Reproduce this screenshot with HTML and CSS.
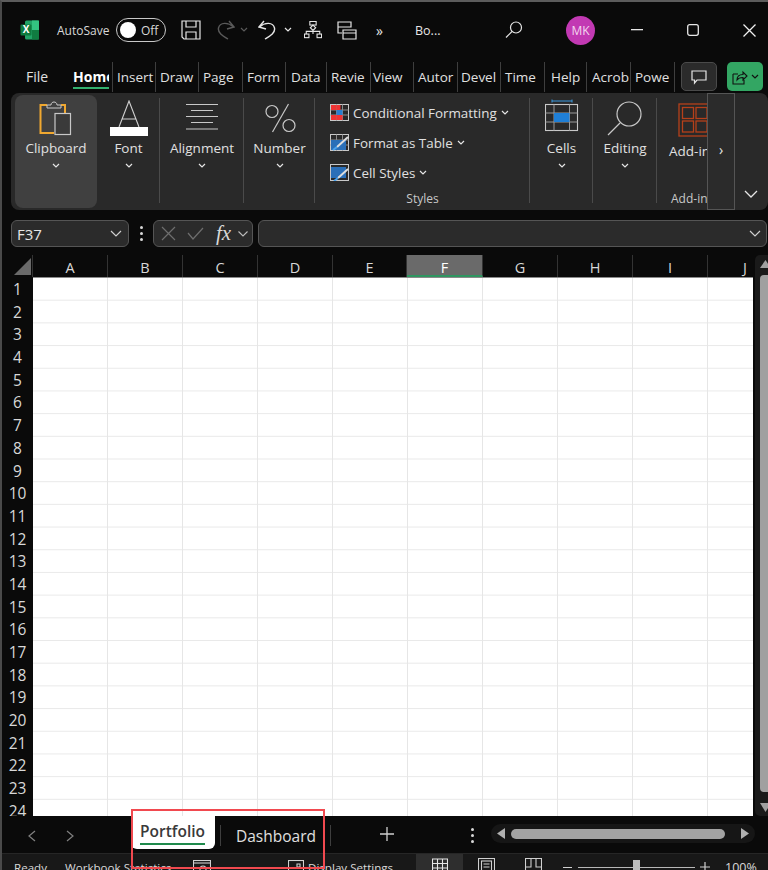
FILE: index.html
```html
<!DOCTYPE html>
<html lang="en">
<head>
<meta charset="utf-8">
<title>Excel</title>
<link rel="stylesheet" href="styles.css">
</head>
<body>
<div class="window">
  <header class="titlebar">
    <svg class="ico-excel" width="20" height="20" viewBox="0 0 20 20"><rect x="5" y="0.5" width="14" height="19" rx="1.5" fill="#21a366"/><rect x="12" y="0.5" width="7" height="9.5" fill="#33c481"/><rect x="12" y="10" width="7" height="9.5" fill="#107c41"/><rect x="0.5" y="4.5" width="11" height="11" rx="1" fill="#0f7b3f"/><text x="6" y="13.2" class="ico-x">X</text></svg>
    <span class="autosave">AutoSave</span>
    <div class="toggle"><span class="knob"></span><span class="toggle-txt">Off</span></div>
    <svg class="ico-save" width="20" height="20" viewBox="0 0 20 20" fill="none" stroke="#e6e6e6" stroke-width="1.2"><path d="M1 1h18v18H3l-2-2z"/><path d="M5 1v6h10V1M5 19v-7h10v7"/></svg>
    <svg class="ico-redo" width="20" height="20" viewBox="0 0 20 20" fill="none" stroke="#5a5a5a" stroke-width="1.4"><path d="M14 1l5 6-7 2M18.500 7C13 2 5 2 3.500 8 2.500 13 8 16 13 19"/></svg>
    <svg class="chev chev-dim" width="8" height="6" viewBox="0 0 8 6" fill="none" stroke="#5a5a5a" stroke-width="1.2"><path d="M1 1l3 3 3-3"/></svg>
    <svg class="ico-undo" width="20" height="20" viewBox="0 0 20 20" fill="none" stroke="#e6e6e6" stroke-width="1.4"><path d="M6 1L1 7l7 2M1.500 7C7 2 15 2 16.500 8 17.500 13 12 16 7 19"/></svg>
    <svg class="chev chev-undo" width="8" height="6" viewBox="0 0 8 6" fill="none" stroke="#e6e6e6" stroke-width="1.2"><path d="M1 1l3 3 3-3"/></svg>
    <svg class="ico-org" width="18" height="18" viewBox="0 0 20 20" fill="none" stroke="#e6e6e6" stroke-width="1.2"><rect x="6.500" y="0.500" width="7" height="4"/><path d="M10 4.500l3 3-3 3-3-3z"/><path d="M2.500 14.500v-3h15v3M10 10.500v4"/><rect x="0.500" y="14.500" width="5" height="4"/><rect x="14.500" y="14.500" width="5" height="4"/></svg>
    <svg class="ico-win" width="20" height="19" viewBox="0 0 20 19" fill="none" stroke="#e6e6e6" stroke-width="1.2"><path d="M1 1h13v5H1zM1 6v6h4"/><path d="M6 9h13v9H6zM6 12h13"/></svg>
    <span class="more">»</span>
    <span class="doc">Bo...</span>
    <svg class="ico-search" width="18" height="18" viewBox="0 0 18 18" fill="none" stroke="#e6e6e6" stroke-width="1.2"><circle cx="11" cy="6.500" r="5.500"/><path d="M7 10.500L1 16.500"/></svg>
    <div class="avatar">MK</div>
    <svg class="ico-min" width="12" height="2" viewBox="0 0 12 2"><rect width="12" height="1.300" fill="#e6e6e6"/></svg>
    <svg class="ico-max" width="12" height="12" viewBox="0 0 12 12" fill="none" stroke="#e6e6e6" stroke-width="1.300"><rect x="0.700" y="0.700" width="10.600" height="10.600" rx="2"/></svg>
    <svg class="ico-close" width="13" height="13" viewBox="0 0 13 13" fill="none" stroke="#f0f0f0" stroke-width="1.300"><path d="M.5.500l12 12M12.500.500l-12 12"/></svg>
  </header>

  <nav class="tabs">
    <span class="tab tab-file">File</span>
    <span class="tab tab-home"><span class="tab-clip">Home</span></span>
    <span class="tab w43">Insert</span>
    <span class="tab w43">Draw</span>
    <span class="tab w44">Page</span>
    <span class="tab w43">Form</span>
    <span class="tab w41">Data</span>
    <span class="tab w44">Revie</span>
    <span class="tab w43 pad-view">View</span>
    <span class="tab w44">Autor</span>
    <span class="tab w43 pad-devel">Devel</span>
    <span class="tab w44">Time</span>
    <span class="tab w42 pad-help">Help</span>
    <span class="tab w44 pad-acro">Acrob</span>
    <span class="tab w44">Powe</span>
    <div class="btn-comment"><svg width="16" height="16" viewBox="0 0 16 16" fill="none" stroke="#e6e6e6" stroke-width="1.200"><path d="M1 2h14v9H6l-2.500 3v-3H1z"/></svg></div>
    <div class="btn-share">
      <svg width="16" height="16" viewBox="0 0 16 16" fill="none" stroke="#111" stroke-width="1.100"><path d="M1 5h5M1 5v10h11v-4M5 11c0-4 3-5.500 6-5.500V3l4 4-4 4V8.500c-3 0-5 1-6 2.500z"/></svg>
      <svg width="8" height="6" viewBox="0 0 8 6" fill="none" stroke="#111" stroke-width="1.200"><path d="M1 1l3 3 3-3"/></svg>
    </div>
  </nav>

  <section class="ribbon">
    <div class="group g-clip">
      <svg class="big" width="34" height="36" viewBox="0 0 34 36" fill="none"><path d="M8 4H1.500v28H15" stroke="#f0a830" stroke-width="2"/><path d="M22 4h4v8" stroke="#f0a830" stroke-width="2"/><path d="M8 7V4h4c0-4 6-4 6 0h4v3z" stroke="#c8c8c8" stroke-width="1"/><rect x="16" y="12.500" width="15.500" height="21" fill="#3a3a3a" stroke="#c8c8c8" stroke-width="1.200"/></svg>
      <span class="g-label">Clipboard</span>
      <svg class="chev-g" width="8" height="6" viewBox="0 0 8 6" fill="none" stroke="#e6e6e6" stroke-width="1.200"><path d="M1 1l3 3 3-3"/></svg>
    </div>
    <div class="group g-font">
      <svg class="big" width="38" height="36" viewBox="0 0 38 36" fill="none"><path d="M9 27L19 1l10 26M12 19h14" stroke="#d0d0d0" stroke-width="1.100"/><rect y="27" width="38" height="9" fill="#fff"/></svg>
      <span class="g-label">Font</span>
      <svg class="chev-g" width="8" height="6" viewBox="0 0 8 6" fill="none" stroke="#e6e6e6" stroke-width="1.200"><path d="M1 1l3 3 3-3"/></svg>
    </div>
    <div class="group g-align">
      <svg class="big" width="34" height="36" viewBox="0 0 34 36" fill="none" stroke="#c8c8c8" stroke-width="1.200"><path d="M1 3.500h32M6 9.500h22M1 15.500h32M6 21.500h22M1 28h32"/></svg>
      <span class="g-label">Alignment</span>
      <svg class="chev-g" width="8" height="6" viewBox="0 0 8 6" fill="none" stroke="#e6e6e6" stroke-width="1.200"><path d="M1 1l3 3 3-3"/></svg>
    </div>
    <div class="group g-num">
      <svg class="big" width="32" height="36" viewBox="0 0 32 36" fill="none" stroke="#c8c8c8" stroke-width="1.200"><circle cx="8" cy="10.500" r="6"/><circle cx="25" cy="24.500" r="6"/><path d="M24.500 3L8.500 31"/></svg>
      <span class="g-label">Number</span>
      <svg class="chev-g" width="8" height="6" viewBox="0 0 8 6" fill="none" stroke="#e6e6e6" stroke-width="1.200"><path d="M1 1l3 3 3-3"/></svg>
    </div>
    <div class="group g-styles">
      <div class="style-rows">
        <div class="style-row">
          <svg width="19" height="17" viewBox="0 0 19 17" fill="none"><rect x=".5" y=".5" width="18" height="16" stroke="#c8c8c8"/><path d="M.5 6h18M.5 11h18M6.500.5v16M12.500.5v16" stroke="#8a8a8a"/><rect x="1" y="1" width="5.500" height="5" fill="#e33"/><rect x="6.500" y="1" width="4" height="5" fill="#e33"/><rect x="6.500" y="6" width="6" height="5" fill="#2a7fd0"/><rect x="1" y="11" width="5.500" height="5" fill="#e33"/><rect x="6.500" y="11" width="6" height="5" fill="#e33"/></svg>
          <span>Conditional Formatting</span>
          <svg width="8" height="6" viewBox="0 0 8 6" fill="none" stroke="#e6e6e6" stroke-width="1.200"><path d="M1 1l3 3 3-3"/></svg>
        </div>
        <div class="style-row">
          <svg width="19" height="17" viewBox="0 0 19 17" fill="none"><rect x=".5" y=".5" width="18" height="16" stroke="#c8c8c8"/><path d="M.5 6h18M.5 11h18M6.500.5v16M12.500.5v16" stroke="#8a8a8a"/><rect x="1" y="6" width="15" height="10" fill="#2a6fb8"/><path d="M18 3L7 13" stroke="#ddd" stroke-width="2"/><path d="M7 13l-4 3" stroke="#4aa3ef" stroke-width="2"/></svg>
          <span>Format as Table</span>
          <svg width="8" height="6" viewBox="0 0 8 6" fill="none" stroke="#e6e6e6" stroke-width="1.200"><path d="M1 1l3 3 3-3"/></svg>
        </div>
        <div class="style-row">
          <svg width="19" height="17" viewBox="0 0 19 17" fill="none"><rect x=".5" y=".5" width="18" height="16" stroke="#c8c8c8"/><rect x="1" y="3" width="15" height="11" fill="#2a6fb8"/><path d="M18 5L8 14" stroke="#ddd" stroke-width="2"/><path d="M8 14l-4 3" stroke="#4aa3ef" stroke-width="2"/></svg>
          <span>Cell Styles</span>
          <svg width="8" height="6" viewBox="0 0 8 6" fill="none" stroke="#e6e6e6" stroke-width="1.200"><path d="M1 1l3 3 3-3"/></svg>
        </div>
      </div>
      <span class="g-foot">Styles</span>
    </div>
    <div class="group g-cells">
      <svg class="big" width="34" height="36" viewBox="0 0 34 36" fill="none"><path d="M7 2h20M7 .5v3M27 .5v3" stroke="#3c9be0"/><rect x=".5" y="5.500" width="32" height="26" stroke="#c8c8c8" stroke-width="1.100"/><path d="M.5 14h32M.5 23h32M9 5.500v26M24.500 5.500v26" stroke="#9a9a9a"/><rect x="9" y="14" width="15.500" height="9" fill="#1f7fd6"/></svg>
      <span class="g-label">Cells</span>
      <svg class="chev-g" width="8" height="6" viewBox="0 0 8 6" fill="none" stroke="#e6e6e6" stroke-width="1.200"><path d="M1 1l3 3 3-3"/></svg>
    </div>
    <div class="group g-edit">
      <svg class="big" width="36" height="36" viewBox="0 0 36 36" fill="none" stroke="#c8c8c8" stroke-width="1.200"><circle cx="22" cy="13" r="12"/><path d="M13 22L1 34"/></svg>
      <span class="g-label">Editing</span>
      <svg class="chev-g" width="8" height="6" viewBox="0 0 8 6" fill="none" stroke="#e6e6e6" stroke-width="1.200"><path d="M1 1l3 3 3-3"/></svg>
    </div>
    <div class="group g-addin">
      <svg class="big" width="33" height="34" viewBox="0 0 33 34" fill="none" stroke="#b5401a" stroke-width="1.300"><rect x="1" y="1" width="31" height="32"/><rect x="4.500" y="4.500" width="11" height="11"/><rect x="18" y="4.500" width="11" height="11"/><rect x="4.500" y="18" width="11" height="11"/><rect x="18" y="18" width="11" height="11"/></svg>
      <span class="g-label lbl-addin">Add-in</span>
      <span class="g-foot foot-addin">Add-in</span>
    </div>
    <div class="overflow-btn">›</div>
    <svg class="ribbon-collapse" width="14" height="8" viewBox="0 0 14 8" fill="none" stroke="#e6e6e6" stroke-width="1.300"><path d="M1 1l6 6 6-6"/></svg>
  </section>

  <section class="formula">
    <div class="namebox"><span>F37</span><svg width="12" height="7" viewBox="0 0 12 7" fill="none" stroke="#d0d0d0" stroke-width="1.200"><path d="M1 1l5 5 5-5"/></svg></div>
    <div class="fdots"><i></i><i></i><i></i></div>
    <div class="fx-box">
      <svg width="15" height="15" viewBox="0 0 15 15" fill="none" stroke="#6e6e6e" stroke-width="1.200"><path d="M1 1l13 13M14 1L1 14"/></svg>
      <svg width="17" height="13" viewBox="0 0 17 13" fill="none" stroke="#6e6e6e" stroke-width="1.200"><path d="M1 6l5 6L16 1"/></svg>
      <span class="fx">fx</span>
      <svg width="10" height="6" viewBox="0 0 10 6" fill="none" stroke="#bdbdbd" stroke-width="1.100"><path d="M.5.500L5 5 9.500.500"/></svg>
    </div>
    <div class="finput"><svg width="12" height="7" viewBox="0 0 12 7" fill="none" stroke="#d0d0d0" stroke-width="1.200"><path d="M1 1l5 5 5-5"/></svg></div>
  </section>

  <section class="sheet">
    <div class="sheet-main">
      <div class="col-heads">
        <div class="corner"><svg width="17" height="17" viewBox="0 0 17 17"><path d="M17 0v17H0z" fill="#6a6a6a"/></svg></div>
        <span class="ch">A</span><span class="ch">B</span><span class="ch">C</span><span class="ch">D</span><span class="ch ch-before">E</span><span class="ch ch-sel">F</span><span class="ch">G</span><span class="ch">H</span><span class="ch">I</span><span class="ch ch-j">J</span>
      </div>
      <div class="grid-wrap">
        <div class="row-heads">
          <span>1</span><span>2</span><span>3</span><span>4</span><span>5</span><span>6</span><span>7</span><span>8</span><span>9</span><span>10</span><span>11</span><span>12</span><span>13</span><span>14</span><span>15</span><span>16</span><span>17</span><span>18</span><span>19</span><span>20</span><span>21</span><span>22</span><span>23</span><span>24</span>
        </div>
        <div class="cells"></div>
      </div>
    </div>
    <div class="vscroll">
      <svg width="11" height="8" viewBox="0 0 11 8"><path d="M5.500 0L11 8H0z" fill="#a0a0a0"/></svg>
      <div class="vs-thumb"></div>
      <svg class="vs-down" width="11" height="9" viewBox="0 0 11 9"><path d="M5.500 9L11 0H0z" fill="#a0a0a0"/></svg>
    </div>
  </section>

  <section class="sheetbar">
    <svg class="nav-l" width="8" height="12" viewBox="0 0 8 12" fill="none" stroke="#808080" stroke-width="1.200"><path d="M7 1L1 6l6 5"/></svg>
    <svg class="nav-r" width="8" height="12" viewBox="0 0 8 12" fill="none" stroke="#808080" stroke-width="1.200"><path d="M1 1l6 5-6 5"/></svg>
    <div class="s-tab s-active"><span class="s-active-txt">Portfolio</span></div>
    <div class="s-sep"></div>
    <div class="s-tab s-dash">Dashboard</div>
    <div class="s-sep"></div>
    <svg class="s-plus" width="14" height="14" viewBox="0 0 14 14" stroke="#d0d0d0" stroke-width="1.300"><path d="M7 0v14M0 7h14"/></svg>
    <div class="s-dots"><i></i><i></i><i></i></div>
    <div class="hscroll">
      <svg width="8" height="11" viewBox="0 0 8 11"><path d="M0 5.500L8 0v11z" fill="#b0b0b0"/></svg>
      <div class="hs-thumb"></div>
      <svg width="8" height="11" viewBox="0 0 8 11"><path d="M8 5.500L0 0v11z" fill="#b0b0b0"/></svg>
    </div>
  </section>

  <footer class="status">
    <span class="st-ready">Ready</span>
    <span class="st-wb">Workbook Statistics</span>
    <svg class="st-ico1" width="18" height="14" viewBox="0 0 18 14" fill="none" stroke="#d0d0d0" stroke-width="1.100"><rect x=".5" y=".5" width="17" height="13"/><path d="M.5 3h17"/><circle cx="10" cy="9" r="3"/></svg>
    <svg class="st-ico2" width="16" height="14" viewBox="0 0 16 14" fill="none" stroke="#d0d0d0" stroke-width="1.100"><rect x=".5" y=".5" width="15" height="13"/><path d="M9 4h3v3h-3z"/></svg>
    <span class="st-disp">Display Settings</span>
    <div class="st-view st-view-on"><svg width="16" height="14" viewBox="0 0 16 14" fill="none" stroke="#e6e6e6" stroke-width="1.100"><path d="M.5 1h15v13H.5zM.5 5.500h15M.5 10h15M5.500 1v13M10.500 1v13"/></svg></div>
    <svg class="st-page" width="17" height="14" viewBox="0 0 17 14" fill="none" stroke="#d0d0d0" stroke-width="1.100"><rect x=".5" y=".5" width="16" height="14"/><rect x="3.500" y="3" width="10" height="12"/><path d="M5.500 6h6M5.500 9h6"/></svg>
    <svg class="st-break" width="17" height="14" viewBox="0 0 17 14" fill="none" stroke="#d0d0d0" stroke-width="1.100"><path d="M.5 14V.5h16V14M.5 9H6V.5M16.500 9H11V.5"/></svg>
    <span class="z-minus"></span>
    <div class="z-track"><span class="z-thumb"></span></div>
    <svg class="z-plus" width="10" height="10" viewBox="0 0 10 10" stroke="#d0d0d0" stroke-width="1.200"><path d="M5 0v10M0 5h10"/></svg>
    <span class="z-pct">100%</span>
  </footer>

  <div class="highlight"></div>
</div>
</body>
</html>
```
FILE: styles.css
```css
* { box-sizing: border-box; }
html, body { margin: 0; height: 870px; overflow: hidden; background: #0a0a0a; }
body { font-family: "Open Sans", "Noto Sans", sans-serif; color: #e6e6e6; }
svg { display: block; flex: none; }

.window { position: relative; width: 768px; height: 870px; display: flex; flex-direction: column; background: #0a0a0a; border-top: 2px solid #5c5c5c; border-left: 2px solid #4a4a4a; overflow: hidden; }

/* title bar */
.titlebar { height: 58px; flex: none; display: flex; align-items: center; padding: 0 0 2px 18px; }
.ico-x { font-size: 10px; font-weight: 700; fill: #fff; text-anchor: middle; }
.autosave { margin-left: 17px; font-size: 12px; width: 59px; color: #d8d8d8; }
.toggle { width: 50px; height: 24px; border: 1.5px solid #c8c8c8; border-radius: 12px; display: flex; align-items: center; padding-left: 3px; }
.knob { width: 16px; height: 16px; border-radius: 50%; background: #fff; }
.toggle-txt { margin-left: 5px; font-size: 12px; color: #d8d8d8; }
.ico-save { margin-left: 15px; }
.ico-redo { margin-left: 14px; }
.chev-dim { margin-left: 5px; }
.ico-undo { margin-left: 10px; }
.chev-undo { margin-left: 6px; }
.ico-org { margin-left: 12px; }
.ico-win { margin-left: 15px; }
.more { margin-left: 19px; width: 24px; font-size: 14px; }
.doc { margin-left: 15px; width: 72px; font-size: 12.5px; }
.ico-search { margin-left: 18px; }
.avatar { margin-left: 43px; width: 29px; height: 29px; border-radius: 50%; background: #c239b3; color: #f3d6ef; font-size: 12px; display: flex; align-items: center; justify-content: center; }
.ico-min { margin-left: 36px; }
.ico-max { margin-left: 44px; }
.ico-close { margin-left: 44px; }

/* tabs */
.tabs { height: 33px; flex: none; display: flex; align-items: center; }
.tab { height: 30px; font-size: 13.5px; line-height: 30px; white-space: nowrap; overflow: hidden; padding-left: 4px; border-right: 1px solid #3e3e3e; color: #e0e0e0; }
.tab-file { width: 71px; padding-left: 24px; border-right: 0; font-size: 14px; }
.tab-home { width: 40px; padding-left: 0; font-weight: 700; color: #fff; font-size: 14px; }
.tab-clip { display: block; width: 36px; overflow: hidden; height: 27px; border-bottom: 2px solid #33b06f; line-height: 30px; }
.w41 { width: 41px; padding-left: 5px; } .w42 { width: 42px; } .w43 { width: 43px; } .w44 { width: 44px; }
.pad-view { padding-left: 2px; }
.pad-devel { padding-left: 3px; }
.pad-help { padding-left: 6px; }
.pad-acro { padding-left: 5px; }
.btn-comment { margin-left: 6px; width: 36px; height: 29px; border: 1px solid #4a4a4a; border-radius: 5px; background: #2b2b2b; display: flex; align-items: center; justify-content: center; }
.btn-share { margin-left: 10px; width: 36px; height: 29px; border-radius: 5px; background: #33a663; display: flex; align-items: center; justify-content: center; gap: 3px; }

/* ribbon */
.ribbon { height: 117px; margin-left: 9px; flex: none; display: flex; position: relative; background: #292929; border-radius: 8px; padding: 2px 0 2px 4px; }
.group { position: relative; display: flex; flex-direction: column; align-items: center; flex: none; }
.group::after { content: ""; position: absolute; right: 0; top: 3px; height: 105px; border-right: 1px solid #4a4a4a; }
.big { margin: 6px 0 1px; }
.g-font .big { margin: 5px 0 2px; }
.g-cells .big { margin: 4px 0 3px; }
.g-label { font-size: 13.5px; line-height: 20px; color: #e0e0e0; white-space: nowrap; }
.chev-g { margin-top: 5px; }
.g-clip { width: 82px; background: #404040; border-radius: 8px; }
.g-clip::after { display: none; }
.g-font { width: 63px; }
.g-align { width: 84px; }
.g-num { width: 71px; }
.g-styles { width: 215px; align-items: stretch; }
.style-rows { padding: 9px 0 0 15px; display: flex; flex-direction: column; gap: 13px; }
.style-row { display: flex; align-items: center; gap: 4px; height: 17px; font-size: 13.4px; color: #e0e0e0; white-space: nowrap; }
.g-foot { position: absolute; bottom: 0; left: 0; right: 0; text-align: center; font-size: 12px; line-height: 18px; color: #c8c8c8; }
.g-cells { width: 63px; }
.g-edit { width: 64px; }
.g-addin { width: 50px; overflow: hidden; }
.g-addin::after { display: none; }
.lbl-addin { position: absolute; left: 12px; top: 46px; }
.foot-addin { left: 14px; right: auto; white-space: nowrap; }
.g-addin .big { position: absolute; left: 21px; margin: 0; top: 8px; }
.overflow-btn { width: 28px; height: 117px; margin-top: -2px; background: #2b2b2b; border: 1px solid #555; font-size: 14px; line-height: 112px; text-align: center; flex: none; }
.ribbon-collapse { position: absolute; right: 10px; bottom: 12px; }

/* formula bar */
.formula { height: 27px; margin-top: 10px; margin-left: 9px; flex: none; display: flex; align-items: stretch; padding-right: 1px; }
.namebox { width: 118px; border: 1px solid #555; border-radius: 6px; background: #2b2b2b; font-size: 15px; display: flex; align-items: center; justify-content: space-between; padding: 0 6px 0 5px; }
.fdots { width: 24px; display: flex; flex-direction: column; align-items: center; justify-content: center; gap: 3px; }
.fdots i, .s-dots i { width: 3px; height: 3px; background: #d8d8d8; border-radius: 50%; display: block; }
.fx-box { width: 100px; border: 1px solid #555; border-radius: 6px; background: #2b2b2b; display: flex; align-items: center; padding: 0 3px 0 7px; }
.fx-box svg:nth-child(2) { margin-left: 11px; }
.fx { margin-left: 12px; font-family: "Liberation Serif", serif; font-style: italic; font-size: 21px; line-height: 25px; color: #d8d8d8; width: 22px; }
.finput { flex: 1; margin-left: 5px; border: 1px solid #555; border-radius: 6px; background: #2b2b2b; display: flex; align-items: center; justify-content: flex-end; padding-right: 5px; }

/* sheet */
.sheet { margin-top: 8px; height: 561px; flex: none; display: flex; }
.sheet-main { width: 751px; flex: none; display: flex; flex-direction: column; }
.col-heads { height: 22px; display: flex; flex: none; }
.corner { width: 31px; display: flex; justify-content: flex-end; align-items: flex-end; padding: 0 1px 2px 0; border-right: 1px solid #333; flex: none; }
.ch { width: 75px; font-size: 14.5px; line-height: 25px; text-align: center; border-right: 1px solid #333; color: #d8d8d8; flex: none; height: 22px; overflow: hidden; }
.ch-before { width: 74px; }
.ch-sel { width: 76px; background: #6a6a6a; border-bottom: 2px solid #2f9560; color: #fff; }
.ch-j { width: 45px; border-right: 0; text-align: right; padding-right: 6px; }
.grid-wrap { flex: 1; display: flex; min-height: 0; }
.row-heads { width: 31px; flex: none; display: flex; flex-direction: column; overflow: hidden; padding-top: 1px; }
.row-heads span { flex: none; height: 22.7px; font-size: 15.5px; text-align: center; line-height: 22.7px; color: #d8d8d8; }
.cells { flex: 1; background-color: #fff; background-image: linear-gradient(to right, #e6e6e6 1px, transparent 1px), linear-gradient(to bottom, #e9e9e9 1px, transparent 1px); background-size: 75px 100%, 100% 22.7px; background-position: -1px 0, 0 -1px; border-top: 1px solid #8a8a8a; }
.vscroll { width: 20px; flex: none; margin-left: 2px; background: #1a1a1a; border-radius: 5px 0 0 5px; display: flex; flex-direction: column; align-items: center; padding: 5px 0 4px; gap: 7px; }
.vs-thumb { flex: 1; width: 11px; background: #a0a0a0; border-radius: 4px; }
.vs-down { margin-top: 4px; }

/* sheet tabs */
.sheetbar { position: relative; height: 37px; flex: none; display: flex; align-items: flex-start; }
.nav-l { margin: 14px 0 0 26px; }
.nav-r { margin: 14px 0 0 30px; }
.s-tab { flex: none; }
.s-active { margin-left: 57px; width: 84px; height: 33px; background: #fff; border-radius: 0 0 6px 6px; padding: 3px 0 0 9px; }
.s-active-txt { display: inline-block; color: #3a3a3a; font-size: 15.5px; line-height: 24px; border-bottom: 2px solid #1f8a4c; font-weight: 600; }
.s-sep { width: 1px; height: 21px; margin-top: 9px; background: #3e3e3e; flex: none; }
.s-active + .s-sep { margin-left: 5px; }
.s-dash { margin-left: 15px; width: 94px; font-size: 15.5px; line-height: 24px; padding-top: 8px; color: #e0e0e0; }
.s-plus { margin: 11px 0 0 49px; }
.s-dots { margin: 12px 0 0 75px; width: 6px; display: flex; flex-direction: column; gap: 3px; align-items: center; }
.hscroll { margin: 8px 0 0 16px; width: 264px; height: 19px; background: #161616; border-radius: 10px; display: flex; align-items: center; padding: 0 6px; gap: 6px; }
.hs-thumb { flex: 1; height: 10px; margin-right: 10px; background: #a3a3a3; border-radius: 5px; }

/* status bar */
.status { position: relative; height: 27px; flex: none; background: #181818; border-top: 1px solid #262626; display: flex; align-items: flex-start; font-size: 11.6px; line-height: 28px; color: #d8d8d8; white-space: nowrap; }
.st-ready { margin-left: 12px; width: 51px; }
.st-wb { width: 126px; }
.st-ico1 { margin: 6px 0 0 2px; }
.st-ico2 { margin: 6px 0 0 77px; }
.st-disp { margin-left: 4px; width: 108px; }
.st-view { width: 47px; height: 27px; display: flex; justify-content: center; padding-top: 4px; }
.st-view-on { background: #2e2e2e; }
.st-page { margin: 4px 0 0 15px; }
.st-break { margin: 4px 0 0 30px; }
.z-minus { margin: 13px 0 0 21px; width: 9px; height: 1px; background: #d0d0d0; }
.z-track { position: relative; margin: 13px 0 0 6px; width: 117px; height: 1px; background: #b8b8b8; }
.z-thumb { position: absolute; left: 55px; top: -7px; width: 7px; height: 16px; background: #bdbdbd; }
.z-plus { margin: 8px 0 0 5px; }
.z-pct { margin-left: 15px; font-size: 12.5px; }

/* annotation */
.highlight { position: absolute; left: 129px; top: 807px; width: 194px; height: 60px; border: 2px solid #f1494f; pointer-events: none; }
```
